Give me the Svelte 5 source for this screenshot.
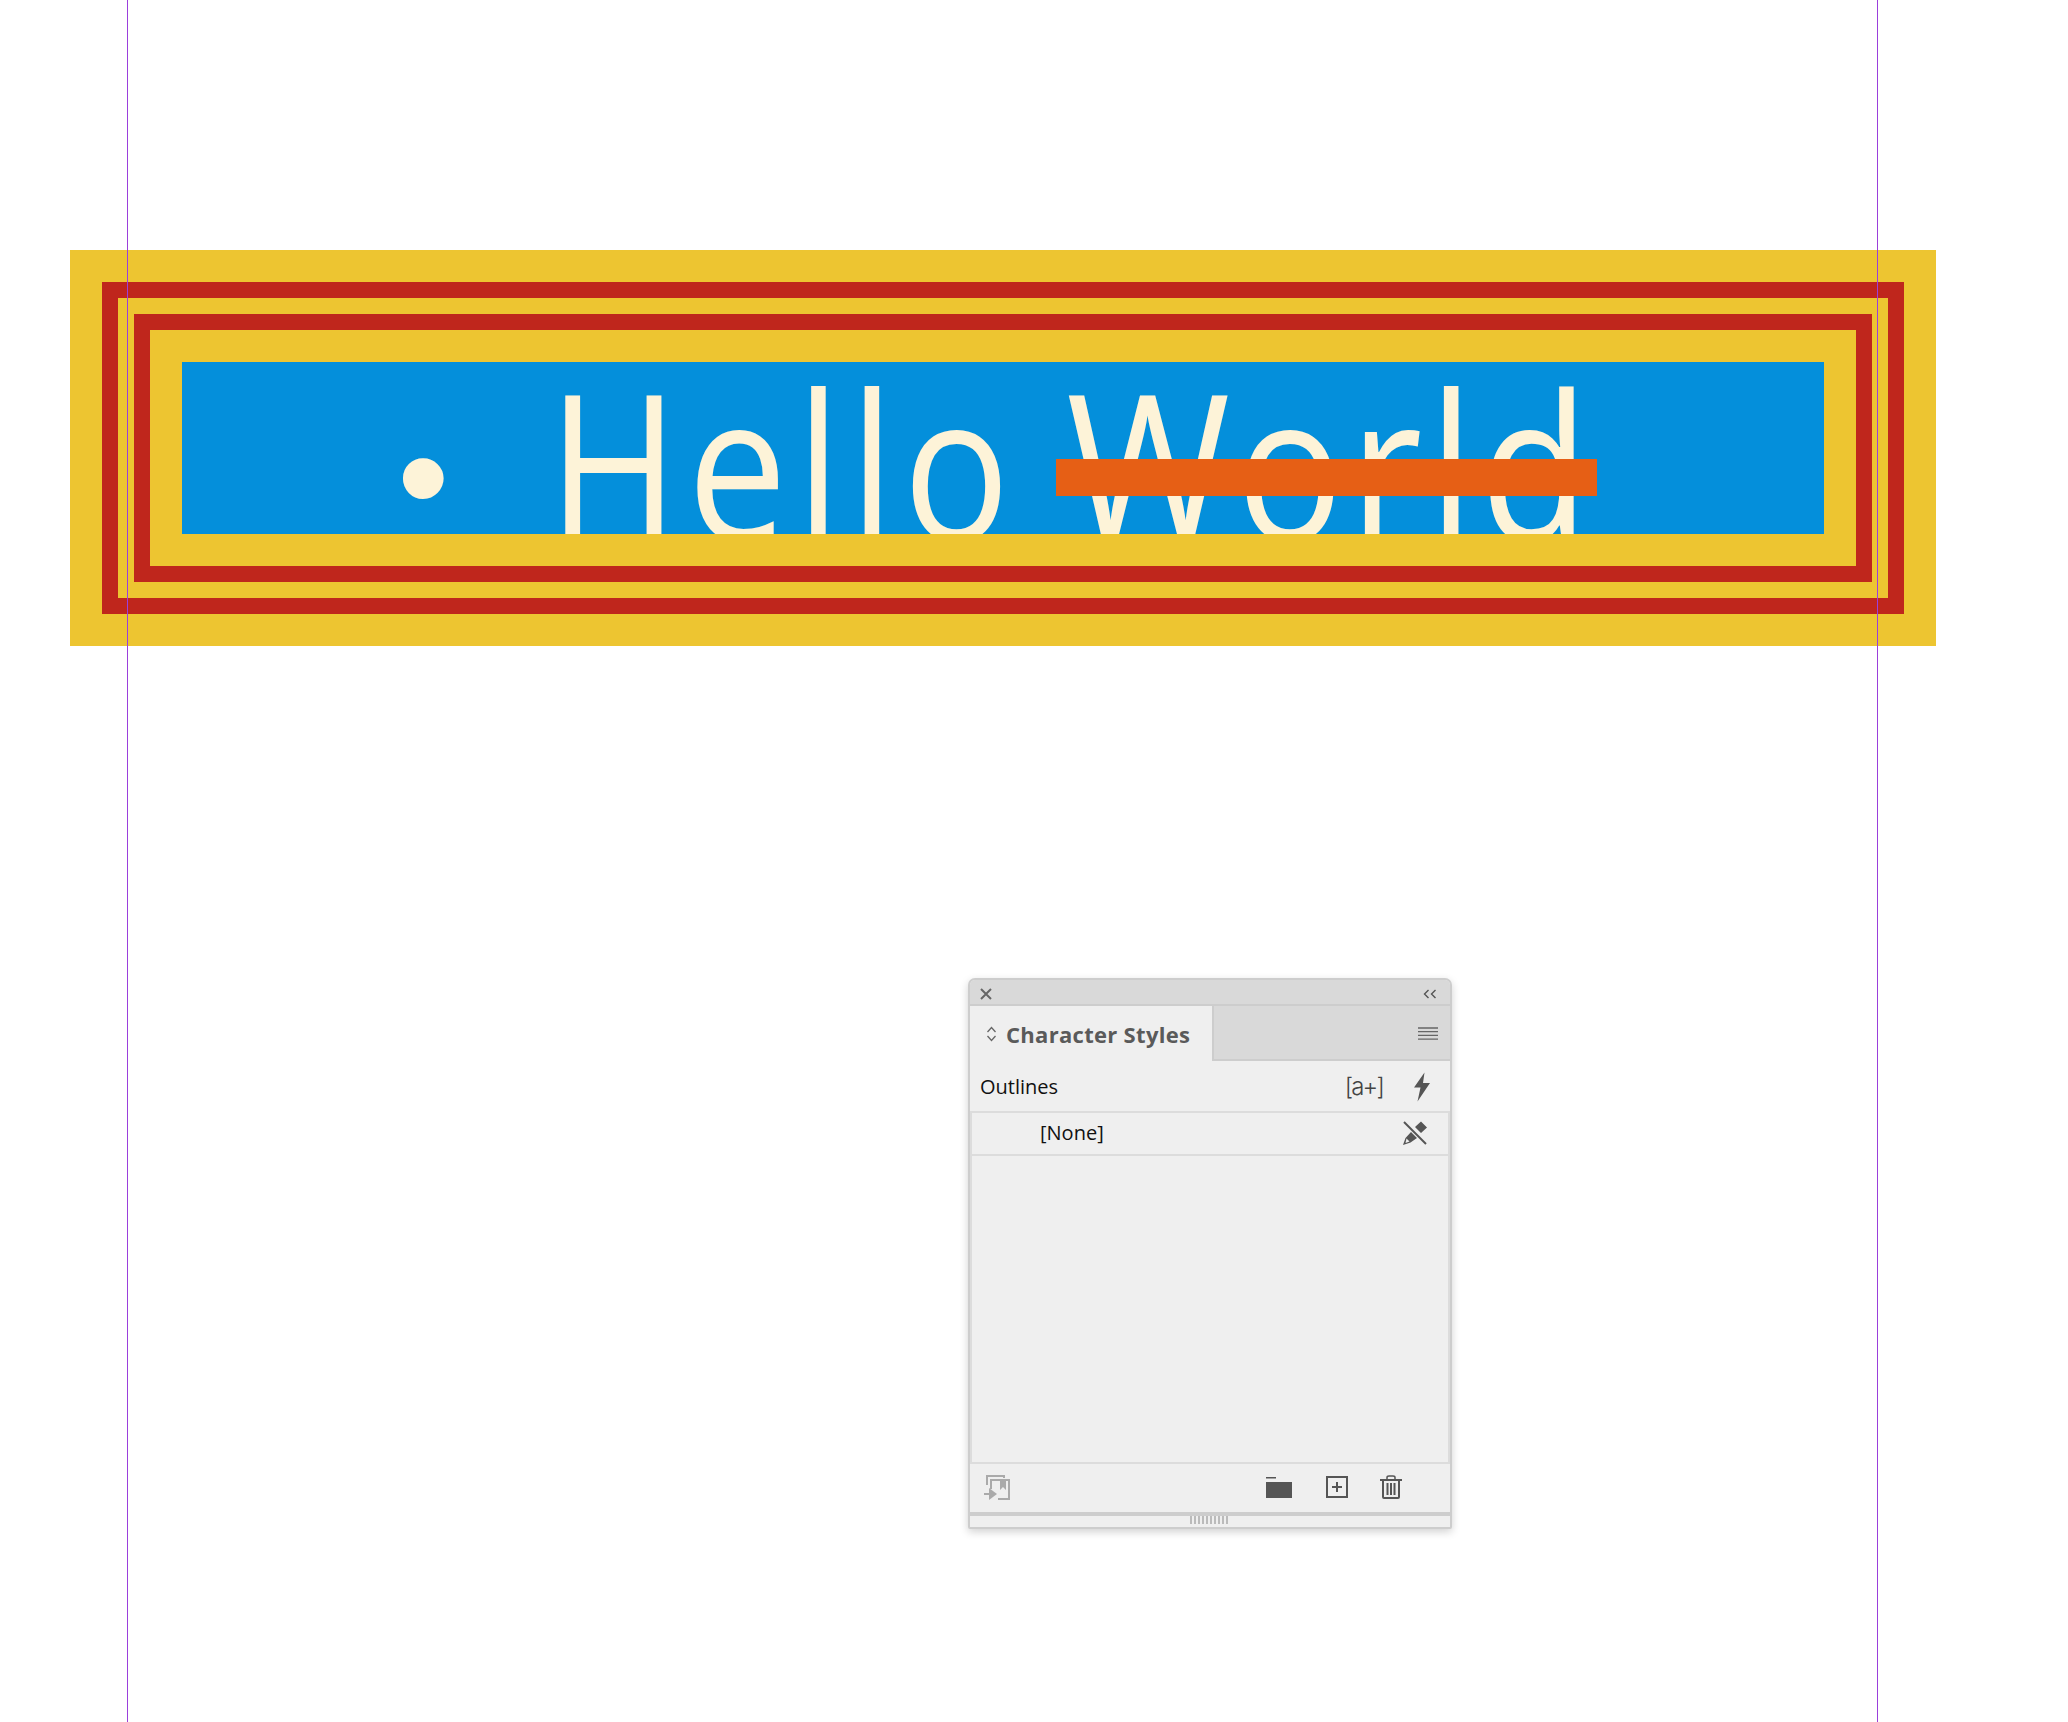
<script>
  const gripLines = Array.from({ length: 10 });
</script>

<div class="page">
  <div class="artwork">
    <div class="ring outer">
      <div class="ring inner">
        <div class="fill">
          <div class="line"><span class="bullet">•</span><span class="hello">Hello <span class="world">World</span></span></div>
          <div class="strike"></div>
        </div>
      </div>
    </div>
  </div>

  <div class="guide left"></div>
  <div class="guide right"></div>

  <section class="panel">
    <header class="titlebar">
      <svg class="close" viewBox="0 0 12 12" width="12" height="12"><path d="M1 1l10 10M11 1L1 11" stroke="#666" stroke-width="2" fill="none"/></svg>
      <svg class="collapse" viewBox="0 0 14 10" width="14" height="10"><path d="M5.500 1L1.500 5l4 4M12.500 1l-4 4 4 4" stroke="#555" stroke-width="1.400" fill="none"/></svg>
    </header>
    <div class="tabs">
      <div class="tab">
        <svg class="updown" viewBox="0 0 11 16" width="11" height="16"><path d="M1.500 6L5.500 1.500 9.500 6M1.500 10l4 4.500 4-4.500" stroke="#666" stroke-width="1.300" fill="none"/></svg>
        <span>Character Styles</span>
      </div>
      <div class="tabrest">
        <svg viewBox="0 0 20 14" width="20" height="14"><path d="M0 1h20M0 4.700h20M0 8.400h20M0 12.100h20" stroke="#666" stroke-width="1.300" fill="none"/></svg>
      </div>
    </div>
    <div class="options">
      <span class="group">Outlines</span>
      <span class="auto">[a+]</span>
      <svg class="bolt" viewBox="0 0 18 30" width="18" height="30"><path d="M11.500 0.500L1 15.500h6.500L4.500 29.500 17 11h-7l1.500-10.500z" fill="#555"/></svg>
    </div>
    <div class="list">
      <div class="row">
        <span>[None]</span>
        <svg viewBox="0 0 24 24" width="24" height="24">
          <path d="M1 1l22 22" stroke="#555" stroke-width="2" fill="none"/>
          <path d="M18 0.500l6 6-6 5.500-6-6zM8 11l6 6-6.500 4.500L0 24l2.500-7z" fill="#555"/>
          <path d="M3.500 17.500l3 3-4 1.500z" fill="#efefef"/>
        </svg>
      </div>
    </div>
    <footer class="foot">
      <svg class="first" viewBox="0 0 26 26" width="26" height="26">
        <path d="M3 11V2h17v2M7 15V6h18v19H14" stroke="#aaa" stroke-width="2" fill="none"/>
        <path d="M16 5h6v11l-3-3-3 3z" fill="#aaa"/>
        <path d="M0 20h8" stroke="#aaa" stroke-width="2"/>
        <path d="M5 14l8 6-8 6z" fill="#aaa"/>
      </svg>
      <svg class="folder" viewBox="0 0 26 21" width="26" height="21"><path d="M0 0h10v1.500H0zM0 5h26v16H0z" fill="#555"/></svg>
      <svg class="add" viewBox="0 0 22 22" width="22" height="22"><path d="M1 1h20v20H1z" stroke="#555" stroke-width="2" fill="none"/><path d="M11 6v10M6 11h10" stroke="#555" stroke-width="2" fill="none"/></svg>
      <svg class="trash" viewBox="0 0 22 24" width="22" height="24">
        <path d="M0 5h22" stroke="#555" stroke-width="2"/>
        <path d="M7 5V2.500C7 1.500 8 1 9 1h4c1 0 2 .5 2 1.500V5" stroke="#555" stroke-width="1.500" fill="none"/>
        <path d="M3 5v17c0 .6.400 1 1 1h14c.6 0 1-.4 1-1V5" stroke="#555" stroke-width="2" fill="none"/>
        <path d="M7.500 8v12M11 8v12M14.500 8v12" stroke="#555" stroke-width="2" fill="none"/>
      </svg>
    </footer>
    <div class="grip">
      {#each gripLines as _}<i></i>{/each}
    </div>
  </section>
</div>

<style>
  :global(body) { margin: 0; background: #fff; }
  .page { position: relative; height: 1722px; overflow: hidden; padding-top: 250px; box-sizing: border-box; }

  .artwork { width: 1866px; margin-left: 70px; padding: 32px; box-sizing: border-box; background: #edc531; }
  .ring { border: 16px solid #bf261c; }
  .outer { padding: 16px; }
  .inner { padding: 32px; }
  .fill { position: relative; height: 172px; background: #048fdb; overflow: hidden; }
  .line {
    display: flex; align-items: baseline; padding-left: 215px;
    font-family: "Open Sans", sans-serif; font-size: 204px; line-height: 260px; color: #fdf3d8;
    margin-top: -30px;
    white-space: nowrap;
  }
  .bullet {
    font-family: "Liberation Sans", sans-serif; font-size: 150px; line-height: 150px;
    align-self: flex-start; margin-top: 69px; margin-right: 98px;
  }
  .hello { letter-spacing: 10px; word-spacing: -8px; transform: scaleX(.87); transform-origin: left center; }
  .world { letter-spacing: 7.450px; }
  .strike { position: absolute; left: 874px; top: 97px; width: 541px; height: 37px; background: #e65f15; }

  .guide { position: absolute; top: 0; bottom: 0; width: 1px; background: #9b3fdc; }
  .guide.left { left: 127px; }
  .guide.right { left: 1877px; }

  .panel {
    position: absolute; left: 968px; top: 978px; width: 484px; box-sizing: border-box;
    display: flex; flex-direction: column;
    border: 2px solid #cdcdcd; border-radius: 7px 7px 2px 2px;
    background: #efefef; box-shadow: 0 3px 9px rgba(0,0,0,.18);
    font-family: "Open Sans", sans-serif; color: #111;
  }
  .titlebar {
    height: 24px; flex: none; display: flex; align-items: center; justify-content: space-between;
    padding: 3px 13px 0 10px; box-sizing: border-box; background: #d9d9d9; border-radius: 5px 5px 0 0;
    margin-bottom: 2px; box-shadow: 0 2px 0 #cdcdcd;
  }
  .tabs { height: 55px; flex: none; display: flex; }
  .tab {
    width: 242px; display: flex; align-items: center; gap: 9px; padding-left: 16px; padding-top: 1px; box-sizing: border-box;
    font-size: 22px; font-weight: 700; color: #5a5a5a; letter-spacing: .3px;
  }
  .tabrest {
    flex: 1; display: flex; align-items: center; justify-content: flex-end; padding: 3px 12px 0 0;
    background: #d9d9d9; border-left: 2px solid #cdcdcd; border-bottom: 2px solid #cdcdcd;
  }
  .options { height: 50px; flex: none; box-sizing: border-box; display: flex; align-items: center; padding: 1px 19px 0 10px; font-size: 20px; }
  .group { flex: 1; }
  .auto { font-family: "Inter", sans-serif; font-weight: 300; font-size: 24px; letter-spacing: -1.800px; color: #444; margin-right: 30px; }
  .list {
    height: 353px; flex: none; box-sizing: border-box; background: #efefef;
    border: 2px solid #dcdcdc;
  }
  .row {
    height: 43px; box-sizing: border-box; display: flex; align-items: center; justify-content: space-between;
    padding: 0 21px 2px 68px; border-bottom: 2px solid #dcdcdc; font-size: 20px;
  }
  .foot { height: 48px; flex: none; box-sizing: border-box; display: flex; align-items: center; padding: 0 0 2px 14px; }
  .first { margin-right: 256px; }
  .folder { margin-right: 34px; }
  .add { margin-right: 32px; }
  .grip {
    height: 11px; flex: none; display: flex; justify-content: center; gap: 2px; padding-right: 2px;
    border-top: 4px solid #cdcdcd;
  }
  .grip i { width: 2px; height: 8px; background: #bbb; }
</style>
